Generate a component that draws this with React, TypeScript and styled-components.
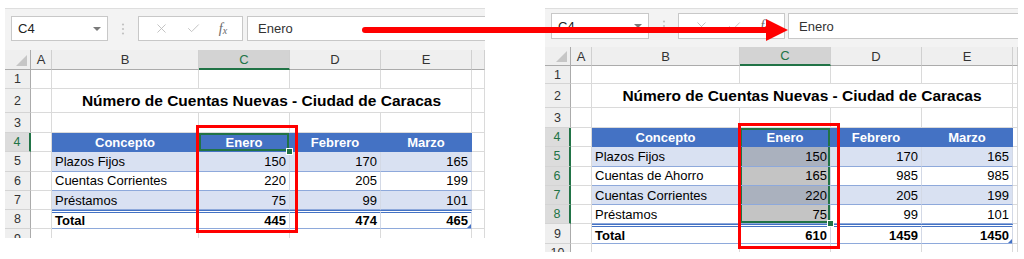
import React from 'react'
import styled, { createGlobalStyle, css } from 'styled-components'
import { X, Check } from 'lucide-react'

const GREEN = '#217346'
const BLUE = '#4472C4'
const BAND = '#D9E1F2'
const ROWLINE = '#8EA9DB'
const GRID = '#dadada'
const HEAD_BG = '#efefef'

type DataRow = { label: string; values: number[] }
type Box = { left: number; top: number; width: number; height: number }
type SheetCfg = {
  width: number
  height: number
  padTop: number
  padBottom: number
  boxH: number
  nameW: number
  sepW: number
  fxW: number
  gap: number
  cols: string
  headH: number
  topRowHs: number[]
  rowH: number
  rows: DataRow[]
  total: number[]
  range: boolean
  red: Box
}

const leftCfg: SheetCfg = {
  width: 480,
  height: 230,
  padTop: 7,
  padBottom: 9,
  boxH: 25,
  nameW: 97,
  sepW: 30,
  fxW: 105,
  gap: 4,
  cols: '26px 21px 147px 91px 91px 91px 1fr',
  headH: 20,
  topRowHs: [19, 24, 20],
  rowH: 19.3,
  rows: [
    { label: 'Plazos Fijos', values: [150, 170, 165] },
    { label: 'Cuentas Corrientes', values: [220, 205, 199] },
    { label: 'Préstamos', values: [75, 99, 101] },
  ],
  total: [445, 474, 465],
  range: false,
  red: { left: 191, top: 75, width: 102, height: 108 },
}

const rightCfg: SheetCfg = {
  width: 473,
  height: 244,
  padTop: 4,
  padBottom: 8,
  boxH: 26,
  nameW: 98,
  sepW: 29,
  fxW: 107,
  gap: 3,
  cols: '26px 21px 148px 91px 91px 91px 1fr',
  headH: 19,
  topRowHs: [18, 24, 20],
  rowH: 19.3,
  rows: [
    { label: 'Plazos Fijos', values: [150, 170, 165] },
    { label: 'Cuentas de Ahorro', values: [165, 985, 985] },
    { label: 'Cuentas Corrientes', values: [220, 205, 199] },
    { label: 'Préstamos', values: [75, 99, 101] },
  ],
  total: [610, 1459, 1450],
  range: true,
  red: { left: 193, top: 76, width: 102, height: 126 },
}

const GlobalStyle = createGlobalStyle`
  body {
    margin: 0;
    background: #fff;
    font-family: "Liberation Sans", Arial, sans-serif;
  }
`

const Page = styled.div`
  position: relative;
  display: flex;
  align-items: flex-start;
  gap: 60px;
  padding: 8px 0 0 5px;
  height: 259px;
  box-sizing: border-box;
  overflow: hidden;
`

const SheetWrap = styled.div<{ $w: number; $h: number }>`
  width: ${p => p.$w}px;
  height: ${p => p.$h}px;
  overflow: hidden;
  display: flex;
  flex-direction: column;
  flex-shrink: 0;
`

const Toolbar = styled.div<{ $pt: number; $pb: number }>`
  display: flex;
  align-items: center;
  background: #f3f3f3;
  border-top: 1px solid #dedede;
  padding: ${p => p.$pt}px 0 ${p => p.$pb}px 6px;
`

const NameBox = styled.div<{ $w: number; $h: number }>`
  width: ${p => p.$w}px;
  height: ${p => p.$h}px;
  box-sizing: border-box;
  background: #fff;
  border: 1px solid #c8c8c8;
  display: flex;
  align-items: center;
  justify-content: space-between;
  padding: 0 6px 0 6px;
  font-size: 13px;
  color: #222;
`

const Caret = styled.span`
  width: 0;
  height: 0;
  border-left: 4px solid transparent;
  border-right: 4px solid transparent;
  border-top: 4px solid #7a7a7a;
`

const Sep = styled.div<{ $w: number }>`
  width: ${p => p.$w}px;
  display: flex;
  justify-content: center;
`

const FxBox = styled.div<{ $w: number; $h: number }>`
  width: ${p => p.$w}px;
  height: ${p => p.$h}px;
  box-sizing: border-box;
  background: #fff;
  border: 1px solid #c8c8c8;
  display: flex;
  align-items: center;
  justify-content: space-around;
  padding: 0 6px;
  color: #bcbcbc;
`

const Fx = styled.span`
  font-family: "Liberation Serif", serif;
  font-style: italic;
  font-size: 14px;
  color: #6a6a6a;
  span {
    font-size: 10px;
    position: relative;
    top: 1px;
  }
`

const Formula = styled.div<{ $h: number; $gap: number }>`
  flex: 1;
  height: ${p => p.$h}px;
  margin-left: ${p => p.$gap}px;
  box-sizing: border-box;
  background: #fff;
  border: 1px solid #c8c8c8;
  border-right: none;
  display: flex;
  align-items: center;
  padding-left: 10px;
  font-size: 13px;
  color: #333;
`

const GridWrap = styled.div`
  position: relative;
  background: #fff;
`

const Row = styled.div<{ $cols: string; $h: number }>`
  display: grid;
  grid-template-columns: ${p => p.$cols};
  height: ${p => p.$h}px;
`

const Corner = styled.div`
  position: relative;
  background: ${HEAD_BG};
  border-right: 1px solid #ababab;
  border-bottom: 1px solid #ababab;
  box-sizing: border-box;
  &::after {
    content: '';
    position: absolute;
    right: 3px;
    bottom: 3px;
    border-left: 11px solid transparent;
    border-bottom: 11px solid #c6c6c6;
  }
`

const ColHead = styled.div<{ $sel?: boolean }>`
  display: flex;
  align-items: center;
  justify-content: center;
  box-sizing: border-box;
  font-size: 13px;
  background: ${p => (p.$sel ? '#d3d3d3' : HEAD_BG)};
  color: ${p => (p.$sel ? GREEN : '#333')};
  border-right: 1px solid #d0d0d0;
  border-bottom: ${p => (p.$sel ? `2px solid ${GREEN}` : '1px solid #ababab')};
`

const RowHead = styled.div<{ $sel?: boolean }>`
  display: flex;
  align-items: center;
  justify-content: center;
  box-sizing: border-box;
  font-size: 12.5px;
  background: ${p => (p.$sel ? '#dcdcdc' : HEAD_BG)};
  color: ${p => (p.$sel ? GREEN : '#333')};
  border-bottom: 1px solid #d4d4d4;
  border-right: ${p => (p.$sel ? `2px solid ${GREEN}` : '1px solid #ababab')};
`

const Cell = styled.div`
  box-sizing: border-box;
  background: #fff;
  border-right: 1px solid ${GRID};
  border-bottom: 1px solid ${GRID};
`

const TitleCell = styled.div`
  grid-column: span 4;
  display: flex;
  align-items: center;
  justify-content: center;
  box-sizing: border-box;
  border-right: 1px solid ${GRID};
  border-bottom: 1px solid ${GRID};
  font-size: 15.5px;
  font-weight: 700;
  color: #000;
  white-space: nowrap;
`

type Kind = 'head' | 'band' | 'plain' | 'total'

const TCell = styled.div<{ $kind: Kind; $align: 'left' | 'right' | 'center'; $shade?: string; $sel?: string; $mark?: boolean }>`
  position: relative;
  display: flex;
  align-items: center;
  justify-content: ${p => (p.$align === 'left' ? 'flex-start' : p.$align === 'right' ? 'flex-end' : 'center')};
  padding: 0 3px;
  box-sizing: border-box;
  font-size: 13px;
  white-space: nowrap;
  background: ${p => p.$shade ?? (p.$kind === 'head' ? BLUE : p.$kind === 'band' ? BAND : '#fff')};
  color: ${p => (p.$kind === 'head' ? '#fff' : '#000')};
  font-weight: ${p => (p.$kind === 'head' || p.$kind === 'total' ? 700 : 400)};
  border-right: 1px solid ${p => (p.$kind === 'head' ? BLUE : '#d3d9e6')};
  border-bottom: 1px solid ${p => (p.$kind === 'head' ? BLUE : ROWLINE)};
  ${p =>
    p.$kind === 'total' &&
    css`
      border-top: 3px double ${BLUE};
    `}
  box-shadow: ${p => p.$sel ?? 'none'};
  ${p =>
    p.$mark &&
    css`
      &::after {
        content: '';
        position: absolute;
        right: 0;
        bottom: 0;
        border-left: 4px solid transparent;
        border-bottom: 4px solid ${BLUE};
      }
    `}
`

const Handle = styled.span`
  position: absolute;
  right: -4px;
  bottom: -4px;
  width: 5px;
  height: 5px;
  background: ${GREEN};
  border: 1px solid #fff;
  z-index: 2;
`

const RedBox = styled.div<{ $b: Box }>`
  position: absolute;
  left: ${p => p.$b.left}px;
  top: ${p => p.$b.top}px;
  width: ${p => p.$b.width}px;
  height: ${p => p.$b.height}px;
  box-sizing: border-box;
  border: 3px solid #ff0000;
  z-index: 3;
  pointer-events: none;
`

const ArrowSvg = styled.svg`
  position: absolute;
  left: 356px;
  top: 18px;
  z-index: 5;
`

type Sel = { top: boolean; bottom: boolean; handle: boolean }

const selShadow = (s?: Sel) => {
  if (!s) return undefined
  const parts = [`inset 2px 0 0 ${GREEN}`, `inset -2px 0 0 ${GREEN}`]
  if (s.top) parts.push(`inset 0 2px 0 ${GREEN}`)
  if (s.bottom) parts.push(`inset 0 -2px 0 ${GREEN}`)
  return parts.join(', ')
}

const Sheet = ({ cfg }: { cfg: SheetCfg }) => {
  const last = cfg.range ? cfg.rows.length : 0
  const selFor = (i: number): Sel | undefined =>
    i > last ? undefined : { top: i === 0, bottom: i === last, handle: i === last }

  const emptyRow = (n: number, h: number) => (
    <Row key={n} $cols={cfg.cols} $h={h}>
      <RowHead>{n}</RowHead>
      <Cell />
      <Cell />
      <Cell />
      <Cell />
      <Cell />
      <Cell />
    </Row>
  )

  const headSel = selFor(0)
  const firstTotal = 5 + cfg.rows.length

  return (
    <SheetWrap $w={cfg.width} $h={cfg.height}>
      <Toolbar $pt={cfg.padTop} $pb={cfg.padBottom}>
        <NameBox $w={cfg.nameW} $h={cfg.boxH}>
          C4
          <Caret />
        </NameBox>
        <Sep $w={cfg.sepW}>
          <svg width="4" height="14" viewBox="0 0 4 14">
            <circle cx="2" cy="2.5" r="1.1" fill="#c2c2c2" />
            <circle cx="2" cy="7" r="1.1" fill="#c2c2c2" />
            <circle cx="2" cy="11.5" r="1.1" fill="#c2c2c2" />
          </svg>
        </Sep>
        <FxBox $w={cfg.fxW} $h={cfg.boxH}>
          <X size={15} strokeWidth={1.4} />
          <Check size={15} strokeWidth={1.4} />
          <Fx>
            f<span>x</span>
          </Fx>
        </FxBox>
        <Formula $h={cfg.boxH} $gap={cfg.gap}>
          Enero
        </Formula>
      </Toolbar>

      <GridWrap>
        <Row $cols={cfg.cols} $h={cfg.headH}>
          <Corner />
          <ColHead>A</ColHead>
          <ColHead>B</ColHead>
          <ColHead $sel>C</ColHead>
          <ColHead>D</ColHead>
          <ColHead>E</ColHead>
          <ColHead />
        </Row>

        {emptyRow(1, cfg.topRowHs[0])}
        <Row $cols={cfg.cols} $h={cfg.topRowHs[1]}>
          <RowHead>2</RowHead>
          <Cell />
          <TitleCell>Número de Cuentas Nuevas - Ciudad de Caracas</TitleCell>
          <Cell />
        </Row>
        {emptyRow(3, cfg.topRowHs[2])}

        <Row $cols={cfg.cols} $h={cfg.rowH}>
          <RowHead $sel>4</RowHead>
          <Cell />
          <TCell $kind="head" $align="center">Concepto</TCell>
          <TCell $kind="head" $align="center" $sel={selShadow(headSel)}>
            Enero
            {headSel?.handle && <Handle />}
          </TCell>
          <TCell $kind="head" $align="center">Febrero</TCell>
          <TCell $kind="head" $align="center">Marzo</TCell>
          <Cell />
        </Row>

        {cfg.rows.map((r, idx) => {
          const i = idx + 1
          const kind: Kind = idx % 2 === 0 ? 'band' : 'plain'
          const s = selFor(i)
          const shade = s ? (kind === 'band' ? '#aab1be' : '#c4c4c4') : undefined
          return (
            <Row key={r.label} $cols={cfg.cols} $h={cfg.rowH}>
              <RowHead $sel={!!s}>{i + 4}</RowHead>
              <Cell />
              <TCell $kind={kind} $align="left">{r.label}</TCell>
              <TCell $kind={kind} $align="right" $shade={shade} $sel={selShadow(s)}>
                {r.values[0]}
                {s?.handle && <Handle />}
              </TCell>
              <TCell $kind={kind} $align="right">{r.values[1]}</TCell>
              <TCell $kind={kind} $align="right">{r.values[2]}</TCell>
              <Cell />
            </Row>
          )
        })}

        <Row $cols={cfg.cols} $h={cfg.rowH}>
          <RowHead>{firstTotal}</RowHead>
          <Cell />
          <TCell $kind="total" $align="left">Total</TCell>
          <TCell $kind="total" $align="right">{cfg.total[0]}</TCell>
          <TCell $kind="total" $align="right">{cfg.total[1]}</TCell>
          <TCell $kind="total" $align="right" $mark>{cfg.total[2]}</TCell>
          <Cell />
        </Row>

        {emptyRow(firstTotal + 1, cfg.rowH)}

        <RedBox $b={cfg.red} />
      </GridWrap>
    </SheetWrap>
  )
}

const App = () => (
  <>
    <GlobalStyle />
    <Page>
      <Sheet cfg={leftCfg} />
      <Sheet cfg={rightCfg} />
      <ArrowSvg width="436" height="24" viewBox="0 0 436 24">
        <line x1="9" y1="12" x2="414" y2="12" stroke="#ff0000" strokeWidth="6" strokeLinecap="round" />
        <polygon points="410,1 432,12 410,23" fill="#ff0000" />
      </ArrowSvg>
    </Page>
  </>
)

export default App
